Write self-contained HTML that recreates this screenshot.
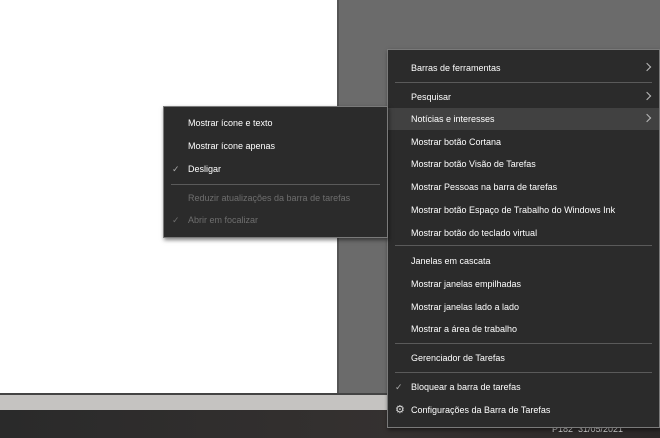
<!DOCTYPE html>
<html><head><style>
*{margin:0;padding:0;box-sizing:border-box}
body{width:660px;height:438px;overflow:hidden;position:relative;background:#fff;font-family:"Liberation Sans",sans-serif;font-size:9px;color:#fff}
.abs{position:absolute}
.menu{position:absolute;background:#2b2b2b;border:1px solid #7a7a7a;box-shadow:1px 2px 4px rgba(0,0,0,.5)}
.it{position:absolute;left:0;right:0;height:22px;line-height:22px;white-space:nowrap}
.sep{position:absolute;height:1px;background:#5a5a5a}
.arr{position:absolute;right:9px;top:7px;width:6px;height:6px;border-top:1px solid #bbb;border-right:1px solid #bbb;transform:rotate(45deg)}
.dis{color:#6e6e6e}
</style></head><body>
<div class="abs" style="left:339px;top:0;width:321px;height:394px;background:#6b6b6b"></div>
<div class="abs" style="left:337px;top:0;width:2px;height:394px;background:#555"></div>
<div class="abs" style="left:0;top:393px;width:400px;height:2px;background:#444"></div>
<div class="abs" style="left:0;top:395px;width:400px;height:15px;background:#c5c3c1"></div>
<div class="abs" style="left:0;top:410px;width:660px;height:28px;background:linear-gradient(90deg,#2a2a2a,#353130 60%,#2c2828)"></div>
<div class="abs" style="left:552px;top:424px;color:#ddd;font-size:9px">P182 &nbsp;31/05/2021</div>

<div class="menu" style="left:387px;top:49px;width:273px;height:379px">
<div class="it" style="top:7px;padding-left:23px">Barras de ferramentas<span class="arr"></span></div>
<div class="sep" style="left:7px;right:7px;top:32px"></div>
<div class="it" style="top:36px;padding-left:23px">Pesquisar<span class="arr"></span></div>
<div class="it" style="top:58px;padding-left:23px;background:#414141">Notícias e interesses<span class="arr"></span></div>
<div class="it" style="top:81px;padding-left:23px">Mostrar botão Cortana</div>
<div class="it" style="top:103px;padding-left:23px">Mostrar botão Visão de Tarefas</div>
<div class="it" style="top:126px;padding-left:23px">Mostrar Pessoas na barra de tarefas</div>
<div class="it" style="top:149px;padding-left:23px">Mostrar botão Espaço de Trabalho do Windows Ink</div>
<div class="it" style="top:172px;padding-left:23px">Mostrar botão do teclado virtual</div>
<div class="sep" style="left:7px;right:7px;top:195px"></div>
<div class="it" style="top:200px;padding-left:23px">Janelas em cascata</div>
<div class="it" style="top:223px;padding-left:23px">Mostrar janelas empilhadas</div>
<div class="it" style="top:246px;padding-left:23px">Mostrar janelas lado a lado</div>
<div class="it" style="top:268px;padding-left:23px">Mostrar a área de trabalho</div>
<div class="sep" style="left:7px;right:7px;top:293px"></div>
<div class="it" style="top:297px;padding-left:23px">Gerenciador de Tarefas</div>
<div class="sep" style="left:7px;right:7px;top:322px"></div>
<div class="it" style="top:326px;padding-left:23px"><span class="abs" style="left:7px;color:#aaa">✓</span>Bloquear a barra de tarefas</div>
<div class="it" style="top:349px;padding-left:23px"><span class="abs" style="left:7px;color:#ddd;font-size:11px">⚙</span>Configurações da Barra de Tarefas</div>
</div>

<div class="menu" style="left:163px;top:106px;width:225px;height:132px">
<div class="it" style="top:5px;padding-left:24px">Mostrar ícone e texto</div>
<div class="it" style="top:28px;padding-left:24px">Mostrar ícone apenas</div>
<div class="it" style="top:51px;padding-left:24px"><span class="abs" style="left:8px;color:#aaa">✓</span>Desligar</div>
<div class="sep" style="left:7px;right:7px;top:77px"></div>
<div class="it dis" style="top:80px;padding-left:24px">Reduzir atualizações da barra de tarefas</div>
<div class="it dis" style="top:102px;padding-left:24px"><span class="abs" style="left:8px">✓</span>Abrir em focalizar</div>
</div>
</body></html>
